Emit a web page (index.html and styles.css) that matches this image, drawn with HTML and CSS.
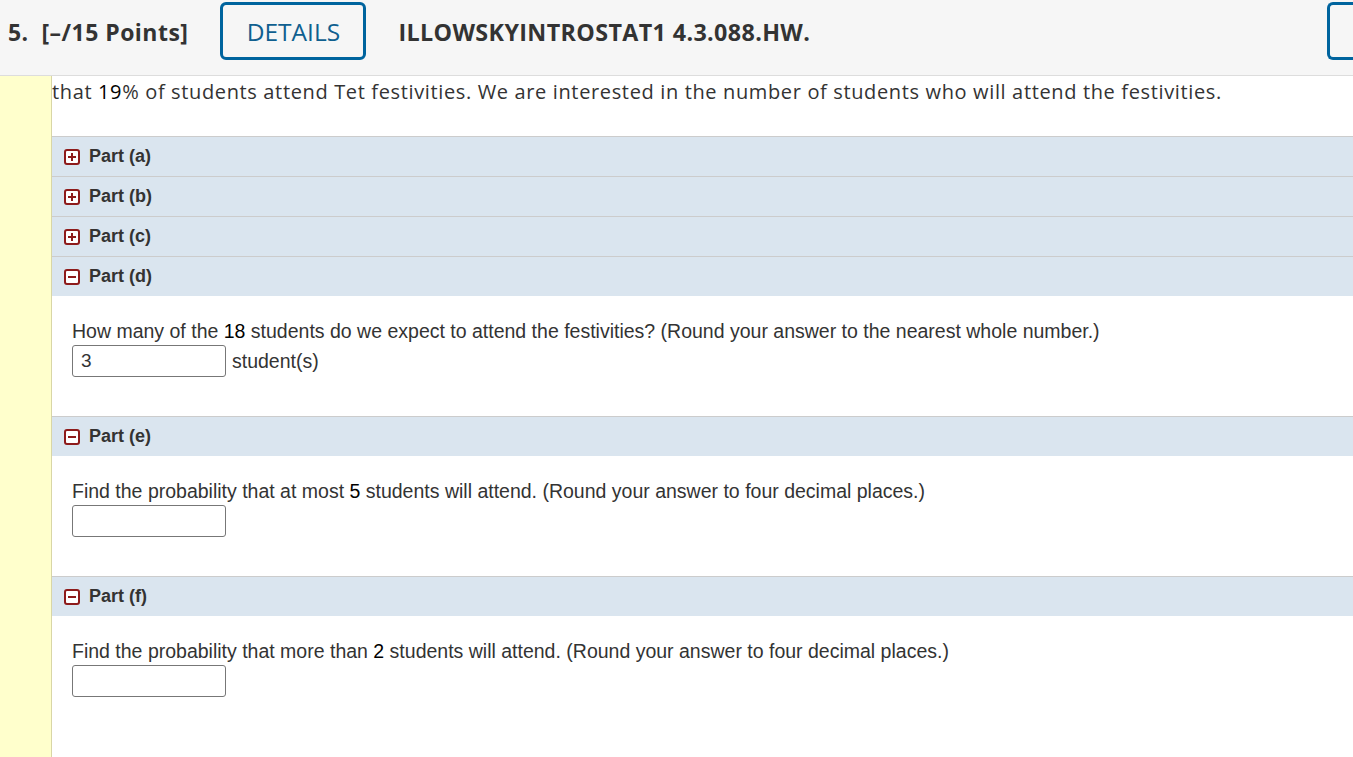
FILE: index.html
```html
<!DOCTYPE html>
<html>
<head>
<meta charset="utf-8">
<link rel="stylesheet" href="styles.css">
</head>
<body>
<div class="header">
  <div class="qnum">5.&nbsp; [–/15 Points]</div>
  <div class="btn-details">DETAILS</div>
  <div class="qid">ILLOWSKYINTROSTAT1 4.3.088.HW.</div>
  <div class="spacer"></div>
  <div class="btn-right"></div>
</div>
<div class="main">
  <div class="strip"></div>
  <div class="content">
    <p class="intro">that <span class="num">19</span>% of students attend Tet festivities. We are interested in the number of students who will attend the festivities.</p>

    <div class="part-bar"><span class="icon plus"></span><span class="part-label">Part (a)</span></div>
    <div class="part-bar"><span class="icon plus"></span><span class="part-label">Part (b)</span></div>
    <div class="part-bar"><span class="icon plus"></span><span class="part-label">Part (c)</span></div>
    <div class="part-bar"><span class="icon minus"></span><span class="part-label">Part (d)</span></div>
    <div class="part-body">
      <p class="question">How many of the <span class="num">18</span> students do we expect to attend the festivities? (Round your answer to the nearest whole number.)</p>
      <div class="answer-row"><input class="answer" type="text" value="3"><span class="unit">student(s)</span></div>
    </div>

    <div class="part-bar"><span class="icon minus"></span><span class="part-label">Part (e)</span></div>
    <div class="part-body">
      <p class="question">Find the probability that at most <span class="num">5</span> students will attend. (Round your answer to four decimal places.)</p>
      <div class="answer-row"><input class="answer" type="text" value=""></div>
    </div>

    <div class="part-bar"><span class="icon minus"></span><span class="part-label">Part (f)</span></div>
    <div class="part-body last">
      <p class="question">Find the probability that more than <span class="num">2</span> students will attend. (Round your answer to four decimal places.)</p>
      <div class="answer-row"><input class="answer" type="text" value=""></div>
    </div>
  </div>
</div>
</body>
</html>
```

FILE: styles.css
```css
html, body {
  margin: 0;
  padding: 0;
  background: #ffffff;
  overflow: hidden;
}
body {
  width: 1353px;
  height: 757px;
}
.header {
  display: flex;
  align-items: center;
  height: 75px;
  background: #f6f6f6;
  border-bottom: 1px solid #dddddd;
  font-family: "Open Sans", sans-serif;
  color: #333333;
  padding-left: 8px;
}
.qnum {
  font-weight: 700;
  font-size: 23px;
  letter-spacing: 0.47px;
  margin-top: -12px;
}
.btn-details {
  margin-left: 32px;
  margin-top: -13px;
  width: 146px;
  height: 58px;
  box-sizing: border-box;
  border: 3px solid #00649e;
  border-radius: 6px;
  color: #0f5f8f;
  font-size: 24.5px;
  display: flex;
  align-items: center;
  justify-content: center;
}
.qid {
  margin-left: 32px;
  margin-top: -12px;
  font-weight: 700;
  font-size: 23.3px;
  letter-spacing: 0.37px;
}
.spacer { flex: 1; }
.btn-right {
  width: 26px;
  height: 58px;
  margin-top: -13px;
  box-sizing: border-box;
  border: 3px solid #00649e;
  border-right: none;
  border-radius: 6px 0 0 6px;
}
.main {
  display: flex;
  height: 681px;
}
.strip {
  width: 51px;
  background: #ffffcc;
  border-right: 1px solid #d9d6a6;
  flex: none;
}
.content {
  flex: 1;
  font-family: "Liberation Sans", Arial, sans-serif;
  color: #333333;
}
.intro {
  margin: 0;
  height: 60px;
  padding-top: 2px;
  box-sizing: border-box;
  font-family: "Open Sans", sans-serif;
  font-size: 20px;
  letter-spacing: 0.64px;
  line-height: 28px;
  color: #333333;
}
.num { color: #000000; }
.part-bar {
  display: flex;
  align-items: center;
  height: 40px;
  box-sizing: border-box;
  border-top: 1px solid #cccccc;
  background: #dae5ef;
  padding-left: 12px;
}
.icon {
  width: 16px;
  height: 16px;
  box-sizing: border-box;
  border: 2px solid #8e1b1b;
  border-radius: 3px;
  background: #ffffff;
  position: relative;
  margin-right: 9px;
  flex: none;
}
.icon::before {
  content: "";
  position: absolute;
  left: 2px;
  top: 5px;
  width: 8px;
  height: 2px;
  background: #8e1b1b;
}
.icon.plus::after {
  content: "";
  position: absolute;
  left: 5px;
  top: 2px;
  width: 2px;
  height: 8px;
  background: #8e1b1b;
}
.part-label {
  font-weight: 700;
  font-size: 18px;
  color: #333333;
}
.part-body {
  height: 120px;
  padding: 24px 0 0 20px;
  box-sizing: border-box;
}
.part-body.last { height: 141px; }
.question {
  margin: 0;
  font-size: 19.5px;
  line-height: 22px;
  color: #333333;
}
.answer-row {
  display: flex;
  align-items: center;
  margin-top: 3px;
}
.answer {
  width: 154px;
  height: 32px;
  box-sizing: border-box;
  border: 1px solid #777777;
  border-radius: 3px;
  font-family: "Liberation Sans", Arial, sans-serif;
  font-size: 19px;
  color: #333333;
  padding: 2px 8px;
  margin: 0;
  outline: none;
}
.unit {
  margin-left: 6px;
  font-size: 19.5px;
  color: #333333;
}
```
